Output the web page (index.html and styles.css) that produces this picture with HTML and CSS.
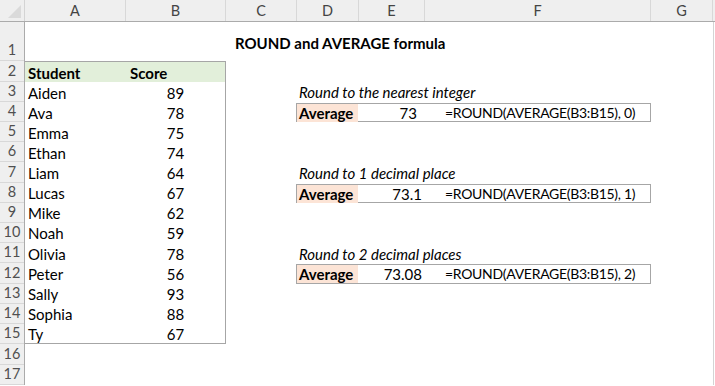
FILE: index.html
```html
<!DOCTYPE html>
<html>
<head>
<meta charset="utf-8">
<link rel="stylesheet" href="styles.css">
</head>
<body>
<div class="book">
  <div class="colbar">
    <div class="corner"><span class="tri"></span></div>
    <div class="ch w-a">A</div>
    <div class="ch w-b">B</div>
    <div class="ch w-c">C</div>
    <div class="ch w-d">D</div>
    <div class="ch w-e">E</div>
    <div class="ch w-f">F</div>
    <div class="ch w-g">G</div>
    <div class="ch w-h"></div>
  </div>
  <div class="body">
    <div class="rowbar">
      <div class="rh r-first">1</div>
      <div class="rh">2</div><div class="rh">3</div><div class="rh">4</div><div class="rh">5</div>
      <div class="rh">6</div><div class="rh">7</div><div class="rh">8</div><div class="rh">9</div>
      <div class="rh">10</div><div class="rh">11</div><div class="rh">12</div><div class="rh">13</div>
      <div class="rh">14</div><div class="rh">15</div><div class="rh">16</div><div class="rh">17</div>
    </div>
    <div class="sheet">
      <div class="title">ROUND and AVERAGE formula</div>

      <div class="scores">
        <div class="hdr">
          <div class="c-name">Student</div>
          <div class="c-head">Score</div>
        </div>
        <div class="rec"><div class="c-name">Aiden</div><div class="c-num">89</div></div>
        <div class="rec"><div class="c-name">Ava</div><div class="c-num">78</div></div>
        <div class="rec"><div class="c-name">Emma</div><div class="c-num">75</div></div>
        <div class="rec"><div class="c-name">Ethan</div><div class="c-num">74</div></div>
        <div class="rec"><div class="c-name">Liam</div><div class="c-num">64</div></div>
        <div class="rec"><div class="c-name">Lucas</div><div class="c-num">67</div></div>
        <div class="rec"><div class="c-name">Mike</div><div class="c-num">62</div></div>
        <div class="rec"><div class="c-name">Noah</div><div class="c-num">59</div></div>
        <div class="rec"><div class="c-name">Olivia</div><div class="c-num">78</div></div>
        <div class="rec"><div class="c-name">Peter</div><div class="c-num">56</div></div>
        <div class="rec"><div class="c-name">Sally</div><div class="c-num">93</div></div>
        <div class="rec"><div class="c-name">Sophia</div><div class="c-num">88</div></div>
        <div class="rec"><div class="c-name">Ty</div><div class="c-num">67</div></div>
      </div>

      <div class="note row-3">Round to the nearest integer</div>
      <div class="calc row-4">
        <div class="lbl">Average</div>
        <div class="val val-int">73</div>
        <div class="fx">=ROUND(AVERAGE(B3:B15), 0)</div>
      </div>

      <div class="note row-7">Round to 1 decimal place</div>
      <div class="calc row-8">
        <div class="lbl">Average</div>
        <div class="val">73.1</div>
        <div class="fx">=ROUND(AVERAGE(B3:B15), 1)</div>
      </div>

      <div class="note row-11">Round to 2 decimal places</div>
      <div class="calc row-12">
        <div class="lbl">Average</div>
        <div class="val">73.08</div>
        <div class="fx">=ROUND(AVERAGE(B3:B15), 2)</div>
      </div>

      <div class="edge"></div>
    </div>
  </div>
</div>
</body>
</html>
```

FILE: styles.css
```css
html, body {
  margin: 0;
  padding: 0;
  background: #ffffff;
}

.book {
  width: 715px;
  height: 386px;
  overflow: hidden;
  font-family: Lato, "Open Sans", sans-serif;
  font-size: 15px;
  line-height: 18px;
  color: #000;
  white-space: nowrap;
}

/* column letters */
.colbar {
  display: flex;
  height: 22px;
  background: #efefef;
  border-bottom: 1px solid #ababab;
  box-sizing: border-box;
}
.corner {
  width: 25px;
  flex: none;
  position: relative;
  border-right: 1px solid #d4d4d4;
  box-sizing: border-box;
}
.tri {
  position: absolute;
  right: 3px;
  bottom: 3px;
  width: 0;
  height: 0;
  border-left: 13px solid transparent;
  border-bottom: 13px solid #dadada;
}
.ch {
  flex: none;
  box-sizing: border-box;
  border-right: 1px solid #d8d8d8;
  text-align: center;
  line-height: 21px;
  color: #444;
  font-size: 14.5px;
}
.w-a { width: 101px; }
.w-b { width: 100px; }
.w-c { width: 71px; }
.w-d { width: 62px; }
.w-e { width: 66px; }
.w-f { width: 226px; }
.w-g { width: 62px; }
.w-h { flex: 1; border-right: none; }

.body {
  display: flex;
}

/* row numbers */
.rowbar {
  width: 25px;
  flex: none;
  background: #efefef;
  border-right: 1px solid #ababab;
  box-sizing: border-box;
  display: grid;
  grid-template-rows: 39.3px repeat(16, 20.23px);
}
.rh {
  border-bottom: 1px solid #d8d8d8;
  box-sizing: border-box;
  color: #505050;
  font-size: 14.5px;
  display: flex;
  align-items: flex-end;
  justify-content: center;
  padding-bottom: 1px;
}

.sheet {
  flex: 1;
  display: grid;
  grid-template-columns: 101px 100px 71px 62px 66px 226px 62px 1fr;
  grid-template-rows: 39.3px repeat(16, 20.23px);
}

.title {
  grid-column: 3 / 7;
  grid-row: 1;
  font-weight: 700;
  padding-left: 9px;
  padding-top: 12px;
}

/* student table A2:B15 */
.scores {
  grid-column: 1 / 3;
  grid-row: 2 / 16;
  border: 1px solid #a6a6a6;
  border-left: none;
  display: grid;
  grid-template-rows: repeat(14, 1fr);
}
.hdr, .rec {
  display: grid;
  grid-template-columns: 101px 1fr;
  align-items: center;
  padding-top: 1px;
}
.hdr {
  background: #e2efda;
  font-weight: 700;
}
.c-name { padding-left: 3px; }
.c-head { padding-left: 4px; }
.c-num { text-align: center; }

.note {
  grid-column: 4 / 7;
  font-style: italic;
  padding-left: 2px;
  align-self: center;
  padding-top: 1px;
}
.row-3 { grid-row: 3; }
.row-7 { grid-row: 7; }
.row-11 { grid-row: 11; }

.calc {
  grid-column: 4 / 7;
  display: grid;
  grid-template-columns: 61px 66px 1fr;
  border: 1px solid #a6a6a6;
  margin-left: -1px;
  margin-top: 1px;
}
.row-4 { grid-row: 4; }
.row-8 { grid-row: 8; }
.row-12 { grid-row: 12; }

.calc > div {
  display: flex;
  align-items: center;
  min-width: 0;
}
.lbl {
  background: #fce4d6;
  font-weight: 700;
  padding-left: 2px;
}
.val {
  justify-content: flex-end;
  padding-right: 2px;
}
.val-int { padding-right: 7px; }
.fx {
  padding-left: 21px;
  font-size: 14px;
  letter-spacing: -0.3px;
}

.edge {
  grid-column: 8;
  grid-row: 1 / 18;
  border-left: 1px solid #d4d4d4;
}
```
